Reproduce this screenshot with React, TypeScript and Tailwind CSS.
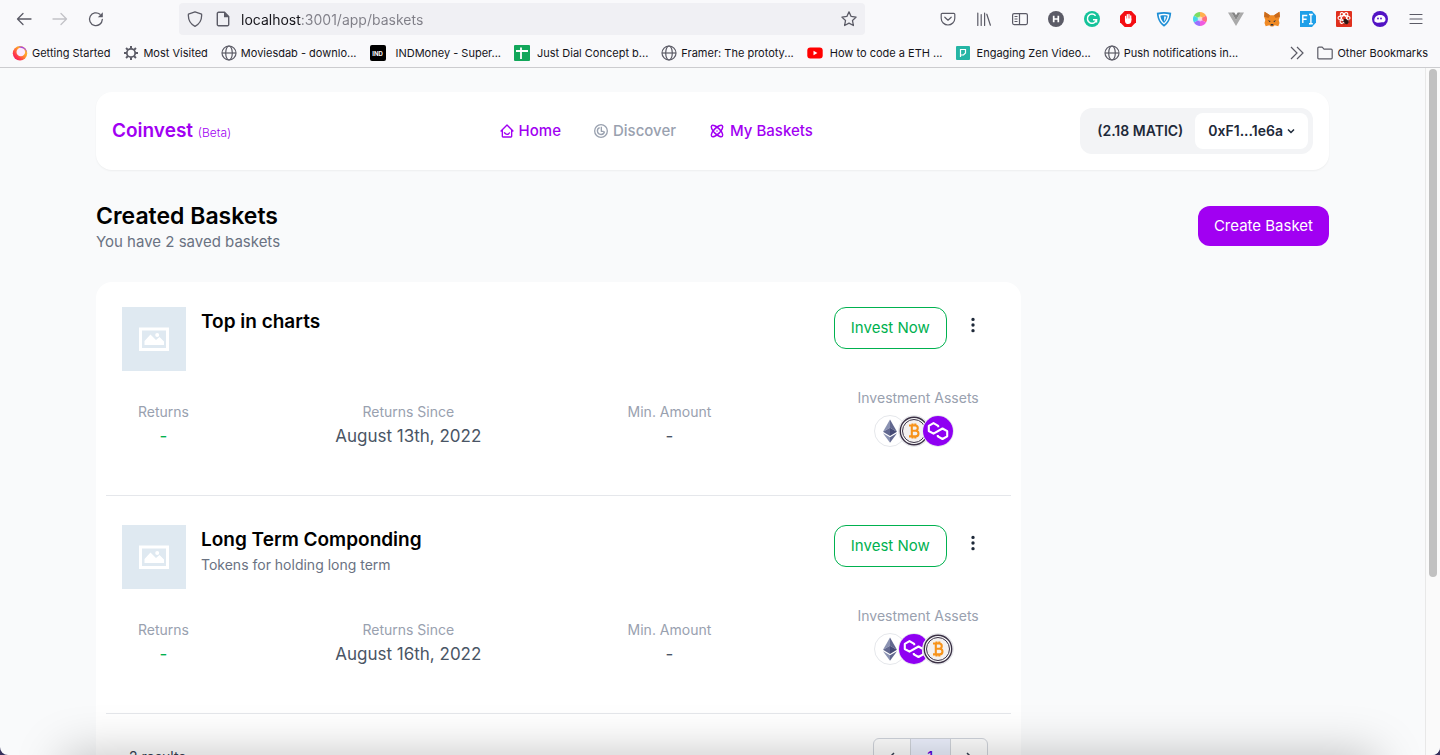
import type { ReactNode } from "react";
import { BiHomeSmile } from "react-icons/bi";
import { BsThreeDotsVertical } from "react-icons/bs";
import { TbAtom } from "react-icons/tb";

type Token = "eth" | "btc" | "matic";

interface Basket {
  name: string;
  description?: string;
  since: string;
  tokens: Token[];
}

const baskets: Basket[] = [
  {
    name: "Top in charts",
    since: "August 13th, 2022",
    tokens: ["eth", "btc", "matic"]
  },
  {
    name: "Long Term Componding",
    description: "Tokens for holding long term",
    since: "August 16th, 2022",
    tokens: ["eth", "matic", "btc"]
  }
];

function GlobeIcon() {
  return (
    <svg viewBox="0 0 16 16" className="size-4" fill="none" stroke="#5b5b66" strokeWidth="1.2">
      <circle cx="8" cy="8" r="7" />
      <ellipse cx="8" cy="8" rx="3.3" ry="7" />
      <path d="M1 8h14" />
    </svg>
  );
}

function FirefoxIcon() {
  return (
    <svg viewBox="0 0 16 16" className="size-4">
      <defs>
        <linearGradient id="ffBody" x1="1" y1="0" x2="0" y2="1">
          <stop offset="0" stopColor="#ffd43a" />
          <stop offset="0.4" stopColor="#ff9a2a" />
          <stop offset="0.75" stopColor="#ff2f4f" />
          <stop offset="1" stopColor="#e0127c" />
        </linearGradient>
      </defs>
      <circle cx="8" cy="8.3" r="7.2" fill="url(#ffBody)" />
      <circle cx="8.8" cy="7" r="4.3" fill="#fbe9ff" />
      <path d="M6.5 1.8C10.5.4 14.8 3 14.9 7.6c-.8-2.6-2.4-4.4-5.3-4.7z" fill="#a443f0" />
    </svg>
  );
}

function GearIcon() {
  return (
    <svg viewBox="0 0 16 16" className="size-4" fill="none" stroke="#5b5b66">
      <circle cx="8" cy="8" r="4.2" strokeWidth="1.8" />
      <path
        strokeWidth="2"
        d="M8 1v2.6M8 12.4V15M1 8h2.6M12.4 8H15M3.05 3.05l1.85 1.85M11.1 11.1l1.85 1.85M3.05 12.95l1.85-1.85M11.1 4.9l1.85-1.85"
      />
    </svg>
  );
}

function IndMoneyIcon() {
  return (
    <span className="flex size-4 items-center justify-center rounded-xs bg-black text-[6px] font-bold text-white">
      IND
    </span>
  );
}

function SheetsIcon() {
  return (
    <svg viewBox="0 0 16 16" className="size-4">
      <rect width="16" height="16" rx="1" fill="#12a65a" />
      <path d="M2 6h12M7 2.5V14" stroke="#fff" strokeWidth="1.8" />
    </svg>
  );
}

function YoutubeIcon() {
  return (
    <svg viewBox="0 0 16 16" className="size-4">
      <rect x="0.3" y="2.4" width="15.4" height="11.2" rx="3" fill="#f00" />
      <path d="M6.5 5.7v4.6L10.4 8z" fill="#fff" />
    </svg>
  );
}

function ZenIcon() {
  return (
    <svg viewBox="0 0 14 14" className="size-3.5">
      <rect width="14" height="14" rx="1" fill="#25b5a5" />
      <path d="M4.5 11V3.5H9.5V7L7.5 9H4.5" fill="none" stroke="#fff" strokeWidth="1.2" />
    </svg>
  );
}

interface Bookmark {
  label: string;
  icon: ReactNode;
  spacing: string;
}

const bookmarks: Bookmark[] = [
  { label: "Getting Started", icon: <FirefoxIcon />, spacing: "gap-1" },
  { label: "Most Visited", icon: <GearIcon />, spacing: "gap-1" },
  { label: "Moviesdab - downlo...", icon: <GlobeIcon />, spacing: "gap-1" },
  { label: "INDMoney - Super...", icon: <IndMoneyIcon />, spacing: "gap-2.5" },
  { label: "Just Dial Concept b...", icon: <SheetsIcon />, spacing: "gap-[7px]" },
  { label: "Framer: The prototy...", icon: <GlobeIcon />, spacing: "gap-1" },
  { label: "How to code a ETH ...", icon: <YoutubeIcon />, spacing: "gap-[7px]" },
  { label: "Engaging Zen Video...", icon: <ZenIcon />, spacing: "gap-[7px]" },
  { label: "Push notifications in...", icon: <GlobeIcon />, spacing: "gap-1" }
];

const extensions: { name: string; art: ReactNode }[] = [
  {
    name: "Pocket",
    art: (
      <g fill="none" stroke="#5b5b66" strokeWidth="1.2" strokeLinecap="round" strokeLinejoin="round">
        <path d="M2.2 2.3h11.6c.6 0 1 .4 1 1v3.9a6.8 6.8 0 0 1-13.6 0V3.3c0-.6.4-1 1-1z" />
        <path d="M4.8 6.2 8 9.2l3.2-3" />
      </g>
    )
  },
  {
    name: "Library",
    art: (
      <path
        d="M1.8 2v12.5M5.2 3.5v11M8.6 2v12.5M10.8 3.2l3.6 11"
        fill="none"
        stroke="#5b5b66"
        strokeWidth="1.2"
        strokeLinecap="round"
      />
    )
  },
  {
    name: "Sidebars",
    art: (
      <g fill="none" stroke="#5b5b66" strokeWidth="1.2">
        <rect x="0.6" y="2.6" width="14.8" height="11" rx="1.5" />
        <path d="M7.5 2.6v11M2.5 5.5h3M2.5 8h3M2.5 10.5h3" />
      </g>
    )
  },
  {
    name: "Account",
    art: (
      <>
        <circle cx="8" cy="8" r="8" fill="#5b5b66" />
        <path d="M5.7 4.7v6.6M10.3 4.7v6.6M5.7 8h4.6" stroke="#fff" strokeWidth="1.7" />
      </>
    )
  },
  {
    name: "Grammarly",
    art: (
      <>
        <circle cx="8" cy="8" r="8" fill="#15c39a" />
        <path
          d="M11.6 4.8a4.6 4.6 0 1 0 .9 4H9M12.5 8.6v3"
          fill="none"
          stroke="#fff"
          strokeWidth="1.5"
        />
      </>
    )
  },
  {
    name: "Ad blocker",
    art: (
      <>
        <path d="M4.7 0h6.6L16 4.7v6.6L11.3 16H4.7L0 11.3V4.7z" fill="#f40d12" />
        <path
          d="M5.6 9V5.4M7.3 8V3.7M9 8V3.5M10.7 9V4.8"
          stroke="#fff"
          strokeWidth="1.3"
          strokeLinecap="round"
        />
        <path d="M5 7.5h6.3v2.6c0 1.8-1.2 3-3.1 3S5 11.7 5 9.900z" fill="#fff" />
      </>
    )
  },
  {
    name: "Shield",
    art: (
      <>
        <path d="M.8 1.8C5.5.6 10.5.6 15.2 1.8 14.9 8.2 12.2 13 8 15.7 3.8 13 1.1 8.2.8 1.8z" fill="#1f8fd6" />
        <path d="M2.6 3.4c3.6-.8 7.2-.8 10.8 0C13 8 11 11.5 8 13.500 5 11.5 3 8 2.6 3.400z" fill="#fff" />
        <path d="M4.300 4.700c2.400-.5 5-.5 7.400 0-.3 2.800-1.700 5.500-3.700 7.300C6 10.200 4.600 7.500 4.300 4.700z" fill="#1f8fd6" />
        <path d="M8 5.500c.8 0 1.600.1 2.400.2-.4 1.800-1.200 3.400-2.400 4.700z" fill="#d5ecfa" />
      </>
    )
  },
  {
    name: "Color picker",
    art: (
      <>
        <path d="M8 8V1a7 7 0 0 1 6.06 3.5z" fill="#ffb14d" />
        <path d="M8 8l6.06-3.5a7 7 0 0 1 0 7z" fill="#ff6f7d" />
        <path d="M8 8l6.06 3.5A7 7 0 0 1 8 15z" fill="#f05be0" />
        <path d="M8 8v7a7 7 0 0 1-6.06-3.5z" fill="#9a70ff" />
        <path d="M8 8l-6.06 3.5a7 7 0 0 1 0-7z" fill="#45d5e8" />
        <path d="M8 8L1.94 4.5A7 7 0 0 1 8 1z" fill="#7ddc62" />
        <circle cx="8" cy="8" r="2.4" fill="#fff" opacity="0.6" />
      </>
    )
  },
  {
    name: "Vue devtools",
    art: (
      <>
        <path d="M0 1.5h3.5L8 9l4.5-7.5H16l-8 13.5z" fill="#aaa" />
        <path d="M3.5 1.5h2.8L8 4.3l1.7-2.8h2.8L8 9z" fill="#858585" />
      </>
    )
  },
  {
    name: "MetaMask",
    art: (
      <>
        <path d="M.6.8 6 4.3h4L15.4.8l.5 5-1.2 3.2.8 3-1.2 3.2-3.6-1-1.5 1.2H6.8l-1.500-1.200-3.600 1L.5 12l.8-3L.1 5.800z" fill="#f08a24" />
        <path d="M.6.8 6 4.3 4.5 7 .1 5.8zM15.4.8 10 4.3 11.5 7l4.4-1.2z" fill="#c96a1c" />
        <path d="M3.8 9.3l2.8.7-.8 1.2zM12.2 9.3l-2.8.7.8 1.2zM6.7 13h2.6v1.4H6.7z" fill="#2b3340" />
      </>
    )
  },
  {
    name: "Form filler",
    art: (
      <>
        <path d="M0 0h12l4 4.5v7L12 16H0z" fill="#1e9fe8" />
        <path
          d="M2.8 12V4.500h4.500M2.800 8.200h3.800M9 3.500h3.800M9 12.800h3.800M10.900 3.500v9.300"
          fill="none"
          stroke="#fff"
          strokeWidth="1.4"
        />
      </>
    )
  },
  {
    name: "React debugger",
    art: (
      <>
        <rect width="16" height="16" rx="1" fill="#e0301e" />
        <g fill="none" stroke="#fff" strokeWidth="1.1">
          <ellipse cx="8" cy="7" rx="6" ry="2.4" />
          <ellipse cx="8" cy="7" rx="6" ry="2.4" transform="rotate(60 8 7)" />
          <ellipse cx="8" cy="7" rx="6" ry="2.4" transform="rotate(-60 8 7)" />
        </g>
        <ellipse cx="10" cy="10.5" rx="2" ry="2.900" fill="#301410" transform="rotate(-35 10 10.5)" />
        <path d="M6.500 10.500l7 .5M8 13.500l5-5" stroke="#301410" strokeWidth="0.8" />
      </>
    )
  },
  {
    name: "Phantom",
    art: (
      <>
        <circle cx="8" cy="8" r="8" fill="#5314c4" />
        <path
          d="M2.5 10.5C1.8 6.5 4.5 4 8 4c3.3 0 5.5 2 5.5 4.5 0 2-1.5 3-3.2 2.8C8.5 11 6 13 2.5 10.5z"
          fill="#fff"
        />
        <circle cx="6" cy="7.5" r="0.9" fill="#5314c4" />
        <circle cx="9" cy="7.5" r="0.9" fill="#5314c4" />
      </>
    )
  },
  {
    name: "Menu",
    art: (
      <path
        d="M2 3.5h12M2 8h12M2 12.5h12"
        stroke="#5b5b66"
        strokeWidth="1.2"
        strokeLinecap="round"
      />
    )
  }
];

function ToolbarButton({ label, children }: { label: string; children: ReactNode }) {
  return (
    <button type="button" aria-label={label} className="flex h-8 w-9 shrink-0 items-center justify-center">
      <svg viewBox="0 0 16 16" className="size-4">
        {children}
      </svg>
    </button>
  );
}

function BrowserChrome() {
  return (
    <header className="shrink-0 border-b border-[#cccccf] bg-[#f9f9fb] text-[#15141a]">
      <div className="flex items-center px-1.5 pt-[3px]">
        <ToolbarButton label="Back">
          <path
            d="M15 8H1.5M7 2.5 1.5 8 7 13.5"
            fill="none"
            stroke="#5b5b66"
            strokeWidth="1.3"
            strokeLinecap="round"
            strokeLinejoin="round"
          />
        </ToolbarButton>
        <ToolbarButton label="Forward">
          <path
            d="M1 8h13.5M9 2.5 14.5 8 9 13.5"
            fill="none"
            stroke="#c2c2c7"
            strokeWidth="1.3"
            strokeLinecap="round"
            strokeLinejoin="round"
          />
        </ToolbarButton>
        <ToolbarButton label="Reload">
          <path
            d="M14.3 8.5A6.4 6.4 0 1 1 12 3.3"
            fill="none"
            stroke="#5b5b66"
            strokeWidth="1.3"
            strokeLinecap="round"
          />
          <path d="M14.8 1.2v5h-5z" fill="#5b5b66" />
        </ToolbarButton>

        <div className="mx-[65px] flex h-8 min-w-0 flex-1 items-center rounded bg-[#f0f0f4] px-2">
          <svg
            viewBox="0 0 16 16"
            className="size-4 shrink-0"
            fill="none"
            stroke="#5b5b66"
            strokeWidth="1.3"
            strokeLinejoin="round"
          >
            <path d="M8 .8 14.6 3.2C15 8.5 12.5 13 8 15.3 3.5 13 1 8.5 1.4 3.2z" />
          </svg>
          <svg viewBox="0 0 16 16" className="ml-3 size-4 shrink-0">
            <path
              d="M3.5 1.3h6L13.7 5.5v8a1.2 1.2 0 0 1-1.2 1.2h-9a1.2 1.2 0 0 1-1.2-1.2v-11a1.2 1.2 0 0 1 1.2-1.2z"
              fill="none"
              stroke="#5b5b66"
              strokeWidth="1.4"
            />
            <path d="M9 1.3v5h5z" fill="#5b5b66" />
          </svg>
          <input
            type="text"
            aria-label="Address"
            defaultValue="localhost:3001/app/baskets"
            className="ml-2.5 h-8 min-w-0 flex-1 bg-[linear-gradient(to_right,#15141a_60px,#7f7e87_60px)] bg-clip-text text-sm text-transparent outline-none"
          />
          <button type="button" aria-label="Bookmark this page">
            <svg
              viewBox="0 0 16 16"
              className="size-4"
              fill="none"
              stroke="#5b5b66"
              strokeWidth="1.3"
              strokeLinejoin="round"
            >
              <path d="M8 .9l2.15 4.55 4.95.65-3.6 3.45.9 4.95L8 12.1l-4.4 2.4.9-4.95L.9 6.1l4.95-.65z" />
            </svg>
          </button>
        </div>

        {extensions.map((extension) => (
          <ToolbarButton key={extension.name} label={extension.name}>
            {extension.art}
          </ToolbarButton>
        ))}
      </div>

      <nav className="mt-1 flex h-7 items-center px-3 text-[11px]">
        <div className="flex min-w-0 flex-1 items-center gap-[13px] overflow-hidden whitespace-nowrap">
          {bookmarks.map((bookmark) => (
            <a key={bookmark.label} href="#" className={`flex items-center ${bookmark.spacing}`}>
              {bookmark.icon}
              {bookmark.label}
            </a>
          ))}
        </div>
        <button type="button" aria-label="More bookmarks" className="mr-3">
          <svg viewBox="0 0 16 16" className="size-4" fill="none" stroke="#5b5b66" strokeWidth="1.2">
            <path d="M2 2l6 6-6 6M8 2l6 6-6 6" />
          </svg>
        </button>
        <a href="#" className="flex items-center gap-1 whitespace-nowrap">
          <svg
            viewBox="0 0 16 16"
            className="size-4"
            fill="none"
            stroke="#5b5b66"
            strokeWidth="1.2"
            strokeLinejoin="round"
          >
            <path d="M.8 12.8V3.2c0-.6.4-1 1-1h3.4l1.8 2h7.2c.6 0 1 .4 1 1v7.6c0 .6-.4 1-1 1H1.8c-.6 0-1-.4-1-1z" />
          </svg>
          Other Bookmarks
        </a>
      </nav>
    </header>
  );
}

function DiscoverIcon() {
  return (
    <svg viewBox="0 0 24 24" className="size-4" fill="none" stroke="currentColor" strokeWidth="2">
      <circle cx="12" cy="12" r="9.5" />
      <path d="M10 7a5.300 5.300 0 1 0 7.200 5.500M12.500 5.500V13M12 12.500h4" />
    </svg>
  );
}

function TopNav() {
  return (
    <div className="flex items-center justify-between rounded-2xl bg-white p-4 shadow-xs">
      <a href="#" className="text-[19px] font-semibold text-[#a100f2]">
        Coinvest <span className="text-xs font-light">(Beta)</span>
      </a>

      <nav className="flex items-center gap-8 text-[15px] font-medium text-[#a100f2]">
        <a href="#" className="flex items-center gap-1">
          <BiHomeSmile className="size-4" />
          Home
        </a>
        <a href="#" className="flex items-center gap-1 text-gray-400">
          <DiscoverIcon />
          Discover
        </a>
        <a href="#" className="flex items-center gap-1">
          <TbAtom className="size-[18px]" />
          My Baskets
        </a>
      </nav>

      <div className="flex items-center rounded-xl bg-gray-100 p-[5px] text-sm font-semibold text-gray-800">
        <span className="px-3">(2.18 MATIC)</span>
        <button type="button" className="flex h-9 items-center gap-1 rounded-lg bg-white px-[13px]">
          0xF1...1e6a
          <svg viewBox="0 0 8 8" className="size-2" fill="none" stroke="currentColor" strokeWidth="1.5">
            <path d="M1 2.5l3 3 3-3" />
          </svg>
        </button>
      </div>
    </div>
  );
}

function PlaceholderImage() {
  return (
    <svg viewBox="0 0 64 64" className="size-16 shrink-0" role="img" aria-label="Basket">
      <rect width="64" height="64" fill="#dfe9f1" />
      <rect x="18.5" y="22" width="27" height="20.5" fill="none" stroke="#fff" strokeWidth="3" />
      <path d="M22.500 38v-4l6-6.500 5.500 5.500 3.500-3 4.500 4.500V38z" fill="#fff" />
      <circle cx="35.2" cy="28" r="2" fill="#fff" />
    </svg>
  );
}

function TokenIcon({ token }: { token: Token }) {
  if (token === "eth") {
    return (
      <svg viewBox="0 0 32 32" className="size-8">
        <circle cx="16" cy="16" r="15.5" fill="#fff" stroke="#e5e7eb" />
        <path d="M16 4.5v8.3l-7 4z" fill="#8a92b2" />
        <path d="M16 4.5v8.3l7 4z" fill="#62688f" />
        <path d="M9 16.8l7-4v8.1z" fill="#62688f" />
        <path d="M23 16.8l-7-4v8.1z" fill="#454a75" />
        <path d="M9 18.3l7 9.4v-5.4z" fill="#8a92b2" />
        <path d="M23 18.3l-7 9.4v-5.4z" fill="#62688f" />
      </svg>
    );
  }

  if (token === "btc") {
    return (
      <svg viewBox="0 0 32 32" className="size-8">
        <circle cx="16" cy="16" r="15.5" fill="#f3f1f4" stroke="#e5e7eb" />
        <circle cx="16" cy="16" r="13.7" fill="#fff" stroke="#3a3145" strokeWidth="1.4" />
        <circle cx="16" cy="16" r="11.500" fill="#f3f1f0" stroke="#3a3145" strokeWidth="1" />
        <path
          d="M13.500 10.500h3.800c3.300 0 3.300 5.200 0 5.200h-3.600M13.500 15.700h4.200c3.700 0 3.700 5.700 0 5.700h-4.500M13.800 10.500v11M11 10.500h3M11 21.400h3M14.500 8.500v2M17.300 8.500v2M14.500 21.400v2.200M17.300 21.400v2.200"
          fill="none"
          stroke="#f7931a"
          strokeWidth="2.1"
        />
      </svg>
    );
  }

  return (
    <svg viewBox="0 0 32 32" className="size-8">
      <circle cx="16" cy="16" r="15.5" fill="#fff" stroke="#e5e7eb" />
      <circle cx="16" cy="16" r="15" fill="#8f00f2" />
      <path
        d="M16.2 12.3v-1.5l-4.7-2.7-4.7 2.7v5.2l4.7 2.7 9-5.2 4.7 2.7v5.1l-4.7 2.7-4.7-2.7V20"
        fill="none"
        stroke="#fff"
        strokeWidth="2.1"
        strokeLinejoin="round"
      />
    </svg>
  );
}

function Stat({ label, children }: { label: string; children: ReactNode }) {
  return (
    <div className="text-center">
      <dt className="text-sm text-gray-400">{label}</dt>
      <dd>{children}</dd>
    </div>
  );
}

function BasketRow({ basket }: { basket: Basket }) {
  return (
    <li className="border-b border-gray-200 pb-[45px]">
      <div className="flex items-start px-4">
        <PlaceholderImage />
        <div className="ml-[15px] flex-1">
          <h2 className="text-[19px] leading-[30px] font-semibold text-black">{basket.name}</h2>
          {basket.description ? (
            <p className="text-sm text-gray-500">{basket.description}</p>
          ) : null}
        </div>
        <button
          type="button"
          className="rounded-xl border border-[#00b14f] px-4 py-2 text-[15px] leading-6 text-[#00b14f]"
        >
          Invest Now
        </button>
        <button
          type="button"
          aria-label="Basket options"
          className="flex h-9 w-12 items-center justify-center pl-1 text-gray-800"
        >
          <BsThreeDotsVertical className="size-[18px]" />
        </button>
      </div>

      <dl className="mt-[17px] flex items-end justify-between px-8">
        <Stat label="Returns">
          <span className="block text-[17px] leading-7 text-[#00b14f]">-</span>
        </Stat>
        <Stat label="Returns Since">
          <span className="block text-[17px] leading-7 text-gray-600">{basket.since}</span>
        </Stat>
        <Stat label="Min. Amount">
          <span className="block text-[17px] leading-7 text-gray-600">-</span>
        </Stat>
        <Stat label="Investment Assets">
          <div className="mt-1 flex h-[38px] items-center justify-center -space-x-2 pr-2">
            {basket.tokens.map((token) => (
              <TokenIcon key={token} token={token} />
            ))}
          </div>
        </Stat>
      </dl>
    </li>
  );
}

function Pagination() {
  return (
    <div className="flex items-center justify-between px-[23px] py-6 text-sm text-gray-700">
      <p>2 results</p>
      <div className="flex h-[38px] overflow-hidden rounded-md border border-gray-300 font-medium">
        <button type="button" aria-label="Previous page" className="flex w-9 items-center justify-center">
          <svg viewBox="0 0 10 10" className="size-2.5" fill="none" stroke="currentColor" strokeWidth="1.5">
            <path d="M7 1L3 5l4 4" />
          </svg>
        </button>
        <button type="button" className="w-[41px] border-x border-gray-300 bg-indigo-50 text-[#5b00e0]">
          1
        </button>
        <button type="button" aria-label="Next page" className="flex w-9 items-center justify-center">
          <svg viewBox="0 0 10 10" className="size-2.5" fill="none" stroke="currentColor" strokeWidth="1.5">
            <path d="M3 1l4 4-4 4" />
          </svg>
        </button>
      </div>
    </div>
  );
}

export default function App() {
  return (
    <div className="h-screen bg-[#35305c] font-['Inter','Liberation_Sans',sans-serif]">
      <div className="relative flex h-full flex-col overflow-hidden rounded-b-lg bg-gray-50">
        <BrowserChrome />

        <div className="flex min-h-0 flex-1">
          <main className="min-w-0 flex-1 overflow-hidden px-24 pt-6">
            <TopNav />

            <section className="mt-7 flex items-center justify-between">
              <div>
                <h1 className="mt-1 text-[23px] leading-7 font-semibold text-black">Created Baskets</h1>
                <p className="text-[15px] leading-6 text-gray-500">You have 2 saved baskets</p>
              </div>
              <button
                type="button"
                className="rounded-xl bg-[#a100f2] px-4 py-2 text-[15px] leading-6 text-white"
              >
                Create Basket
              </button>
            </section>

            <section className="mt-7 w-3/4 rounded-2xl bg-white px-2.5 pt-[25px]">
              <ul className="flex flex-col gap-[29px]">
                {baskets.map((basket) => (
                  <BasketRow key={basket.name} basket={basket} />
                ))}
              </ul>
              <Pagination />
            </section>
          </main>

          <div className="w-[15px] shrink-0 border-l border-[#e8e8e8] bg-[#fafafa] px-[3px] pt-px">
            <div className="h-[508px] rounded-full bg-[#c1c1c1]" />
          </div>
        </div>

        {/* soft shade rising from the bottom edge */}
        <div className="pointer-events-none absolute inset-x-16 top-full h-12 shadow-[0_0_48px_rgba(0,0,0,0.25)]" />
      </div>
    </div>
  );
}
